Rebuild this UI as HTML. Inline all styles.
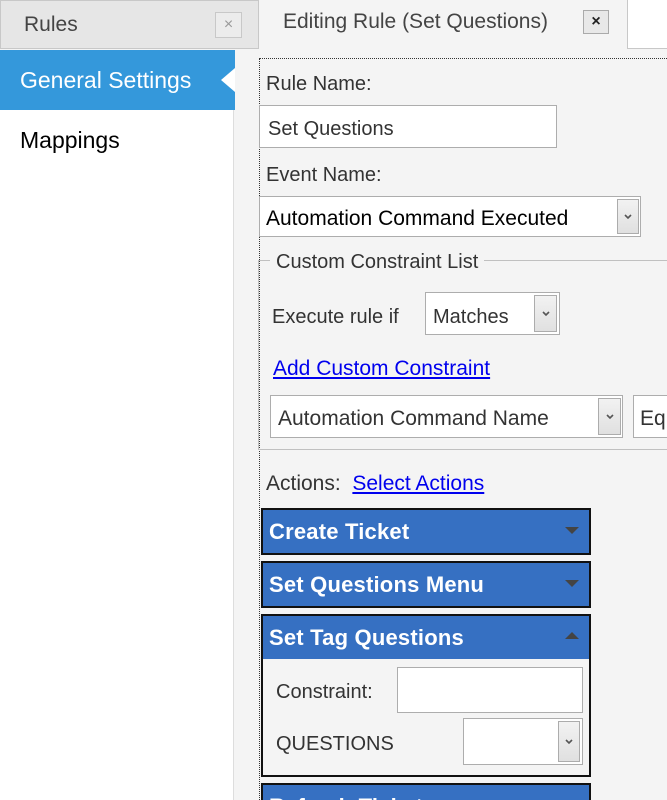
<!DOCTYPE html>
<html><head><style>
*{margin:0;padding:0;box-sizing:border-box}
html,body{width:667px;height:800px;overflow:hidden}
body{background:#f4f4f4;font-family:"Liberation Sans",sans-serif;color:#333;position:relative;font-size:20px}
.a{position:absolute;white-space:nowrap}
.box{position:absolute;background:#fff;border:1px solid #adadad}
.arr{position:absolute;background:linear-gradient(#f2f2f2,#e0e0e0);border:1px solid #acacac}
.arr svg{position:absolute;left:50%;top:50%;margin:-3px 0 0 -4px}
a{color:#0000ee;text-decoration:underline}
.p{position:absolute;left:261px;width:330px;height:47px;background:#3670c2;border:2px solid #111;color:#fff;font-weight:bold;font-size:22px;padding:9px 0 0 6px;letter-spacing:0.2px}
.tri{position:absolute;right:10px;top:17px;width:0;height:0;border-left:7px solid transparent;border-right:7px solid transparent;border-top:7px solid #444}
.up{border-top:0;border-bottom:7px solid #444;top:16px}
</style></head><body>
<div class="a" style="left:0;top:0;width:259px;height:49px;background:#e6e6e6;border:1px solid #c8c8c8"></div>
<div class="a" style="left:24px;top:13px;font-size:21px;color:#444">Rules</div>
<div class="a" style="left:215px;top:12px;width:27px;height:26px;border:1px solid #c8c8c8;background:#ececec;color:#999;font-size:16px;text-align:center;line-height:24px">×</div>
<div class="a" style="left:627px;top:0;width:40px;height:49px;background:#fff;border-left:1px solid #c8c8c8;border-bottom:1px solid #c8c8c8"></div>
<div class="a" style="left:283px;top:10px;font-size:21px;color:#444">Editing Rule (Set Questions)</div>
<div class="a" style="left:583px;top:10px;width:26px;height:24px;border:1px solid #aaa;background:#e8e8e8;color:#222;font-size:16px;font-weight:bold;text-align:center;line-height:22px">×</div>
<div class="a" style="left:0;top:50px;width:234px;height:750px;background:#fff;border-right:1px solid #ddd"></div>
<div class="a" style="left:0;top:50px;width:235px;height:60px;background:#3498db"></div>
<div class="a" style="left:221px;top:68px;width:0;height:0;border-top:12px solid transparent;border-bottom:12px solid transparent;border-right:14px solid #fff"></div>
<div class="a" style="left:20px;top:67px;font-size:23px;color:#fff">General Settings</div>
<div class="a" style="left:20px;top:127px;font-size:23px;color:#000">Mappings</div>
<div class="a" style="left:259px;top:58px;width:420px;height:750px;border-left:1px dotted #333;border-top:1px dotted #333"></div>
<div class="a" style="left:266px;top:73px">Rule Name:</div>
<div class="box" style="left:259px;top:105px;width:298px;height:43px"></div>
<div class="a" style="left:268px;top:118px;font-size:20px">Set Questions</div>
<div class="a" style="left:266px;top:164px">Event Name:</div>
<div class="box" style="left:259px;top:196px;width:382px;height:41px"></div>
<div class="a" style="left:266px;top:207px;color:#000;font-size:21px">Automation Command Executed</div>
<div class="arr" style="left:617px;top:199px;width:22px;height:35px"><svg width="8" height="6"><path d="M1 1L4 4L7 1" stroke="#555" stroke-width="1.6" fill="none"/></svg></div>
<div class="a" style="left:258px;top:260px;width:420px;height:190px;border:1px solid #c0c0c0;border-right:0"></div>
<div class="a" style="left:270px;top:251px;background:#f4f4f4;padding:0 6px">Custom Constraint List</div>
<div class="a" style="left:272px;top:306px">Execute rule if</div>
<div class="box" style="left:425px;top:292px;width:135px;height:43px"></div>
<div class="a" style="left:433px;top:306px">Matches</div>
<div class="arr" style="left:534px;top:295px;width:23px;height:37px"><svg width="8" height="6"><path d="M1 1L4 4L7 1" stroke="#555" stroke-width="1.6" fill="none"/></svg></div>
<div class="a" style="left:273px;top:357px;font-size:21px"><a>Add Custom Constraint</a></div>
<div class="box" style="left:270px;top:395px;width:353px;height:43px"></div>
<div class="a" style="left:278px;top:407px;font-size:21px">Automation Command Name</div>
<div class="arr" style="left:598px;top:398px;width:23px;height:37px"><svg width="8" height="6"><path d="M1 1L4 4L7 1" stroke="#555" stroke-width="1.6" fill="none"/></svg></div>
<div class="box" style="left:633px;top:395px;width:40px;height:43px"></div>
<div class="a" style="left:640px;top:407px;font-size:21px">Eq</div>
<div class="a" style="left:266px;top:472px;font-size:21px">Actions:&nbsp; <a>Select Actions</a></div>
<div class="p" style="top:508px">Create Ticket<div class="tri"></div></div>
<div class="p" style="top:561px">Set Questions Menu<div class="tri"></div></div>
<div class="p" style="top:614px">Set Tag Questions<div class="tri up"></div></div>
<div class="a" style="left:261px;top:659px;width:330px;height:118px;border:2px solid #111;border-top:0;background:#f4f4f4"></div>
<div class="a" style="left:276px;top:681px">Constraint:</div>
<div class="box" style="left:397px;top:667px;width:186px;height:46px"></div>
<div class="a" style="left:276px;top:733px">QUESTIONS</div>
<div class="box" style="left:463px;top:718px;width:120px;height:47px"></div>
<div class="arr" style="left:558px;top:721px;width:22px;height:41px"><svg width="8" height="6"><path d="M1 1L4 4L7 1" stroke="#555" stroke-width="1.6" fill="none"/></svg></div>
<div class="p" style="top:783px">Refresh Ticket</div>
</body></html>
